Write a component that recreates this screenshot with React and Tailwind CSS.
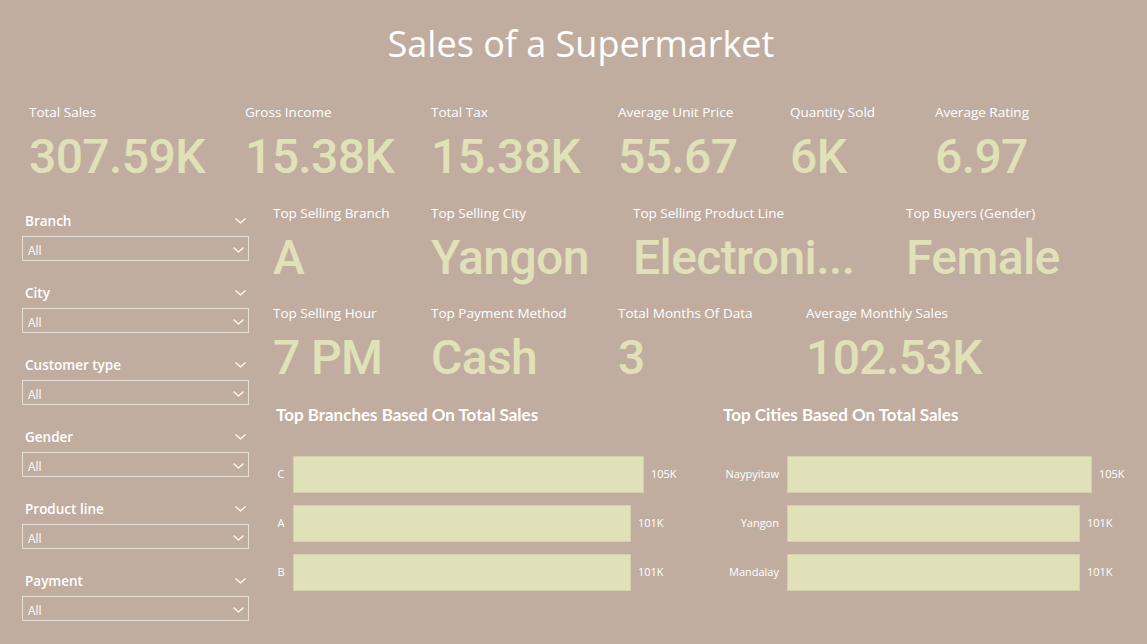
import React from "react";

const Chevron = ({ className = "" }) => (
  <svg width="11" height="6" viewBox="0 0 11 6" className={className} fill="none">
    <polyline points="0.5,0.5 5.5,5 10.5,0.5" stroke="#ffffff" strokeWidth="1.1" />
  </svg>
);

const Kpi = ({ label, value, w }) => (
  <div className={`${w} shrink-0`}>
    <div className="text-[13.5px] leading-[16px] text-white font-['Open_Sans',sans-serif] whitespace-nowrap">{label}</div>
    <div className="mt-[9px] text-[48px] leading-[56px] font-medium tracking-[-0.6px] text-[#e1e1b9] font-['Roboto',sans-serif] whitespace-nowrap">{value}</div>
  </div>
);

const Slicer = ({ title }) => (
  <div className="h-[72px]">
    <div className="h-[20px] flex items-center justify-between pl-[3px] pr-[3px]">
      <span className="text-[13.5px] leading-[20px] font-semibold text-white font-['Open_Sans',sans-serif]">{title}</span>
      <Chevron />
    </div>
    <div className="mt-[5px] h-[25px] border border-[#e6dfd8] flex items-center justify-between pl-[5px] pr-[4px]">
      <span className="text-[12px] leading-[16px] text-white font-['Open_Sans',sans-serif] pt-[4px]">All</span>
      <Chevron className="mt-[2px]" />
    </div>
  </div>
);

const BarChart = ({ title, rows, labelW, gap, titlePad }) => (
  <div>
    <div className={`${titlePad} text-[17px] leading-[20px] font-bold text-white font-['Lato',sans-serif] whitespace-nowrap`}>{title}</div>
    <div className="mt-[31px] flex flex-col gap-[12px]">
      {rows.map((r) => (
        <div key={r.label} className="flex items-center h-[37px]">
          <div className={`${labelW} shrink-0 text-[11px] text-white font-['Open_Sans',sans-serif] ${r.align}`}>{r.label}</div>
          <div className={`${gap} h-[37px] bg-[#e1e1b9] border border-[#d4cfad]`} style={{ width: r.w }} />
          <div className="ml-[7px] text-[11px] text-white font-['Open_Sans',sans-serif]">{r.value}</div>
        </div>
      ))}
    </div>
  </div>
);

export default function App() {
  return (
    <div className="w-[1147px] h-[644px] bg-[#c1ad9f] overflow-hidden font-['Open_Sans',sans-serif]">
      <div className="mt-[24px] h-[40px] text-center pl-[15px] text-[36px] leading-[40px] font-normal text-white">
        Sales of a Supermarket
      </div>
      <div className="mt-[40px] flex pl-[29px]">
        <Kpi w="w-[216px]" label="Total Sales" value="307.59K" />
        <Kpi w="w-[186px]" label="Gross Income" value="15.38K" />
        <Kpi w="w-[187px]" label="Total Tax" value="15.38K" />
        <Kpi w="w-[172px]" label="Average Unit Price" value="55.67" />
        <Kpi w="w-[145px]" label="Quantity Sold" value="6K" />
        <Kpi w="w-[180px]" label="Average Rating" value="6.97" />
      </div>
      <div className="mt-[20px] flex">
        <aside className="ml-[22px] w-[227px] shrink-0 pt-[6px]">
          {["Branch", "City", "Customer type", "Gender", "Product line", "Payment"].map((t) => (
            <Slicer key={t} title={t} />
          ))}
        </aside>
        <main className="ml-[24px] flex-1">
          <div className="flex">
            <Kpi w="w-[158px]" label="Top Selling Branch" value="A" />
            <Kpi w="w-[202px]" label="Top Selling City" value="Yangon" />
            <Kpi w="w-[273px]" label="Top Selling Product Line" value="Electroni..." />
            <Kpi w="w-[200px]" label="Top Buyers (Gender)" value="Female" />
          </div>
          <div className="mt-[19px] flex">
            <Kpi w="w-[158px]" label="Top Selling Hour" value="7 PM" />
            <Kpi w="w-[187px]" label="Top Payment Method" value="Cash" />
            <Kpi w="w-[188px]" label="Total Months Of Data" value="3" />
            <Kpi w="w-[250px]" label="Average Monthly Sales" value="102.53K" />
          </div>
          <div className="mt-[19px] grid grid-cols-[447px_1fr]">
            <BarChart
              title="Top Branches Based On Total Sales"
              titlePad="pl-[3px]"
              labelW="w-[16px]"
              gap="ml-[4px]"
              rows={[
                { label: "C", value: "105K", w: 351, align: "text-center" },
                { label: "A", value: "101K", w: 338, align: "text-center" },
                { label: "B", value: "101K", w: 338, align: "text-center" },
              ]}
            />
            <BarChart
              title="Top Cities Based On Total Sales"
              titlePad="pl-[3px]"
              labelW="w-[59px]"
              gap="ml-[8px]"
              rows={[
                { label: "Naypyitaw", value: "105K", w: 305, align: "text-right" },
                { label: "Yangon", value: "101K", w: 293, align: "text-right" },
                { label: "Mandalay", value: "101K", w: 293, align: "text-right" },
              ]}
            />
          </div>
        </main>
      </div>
    </div>
  );
}
